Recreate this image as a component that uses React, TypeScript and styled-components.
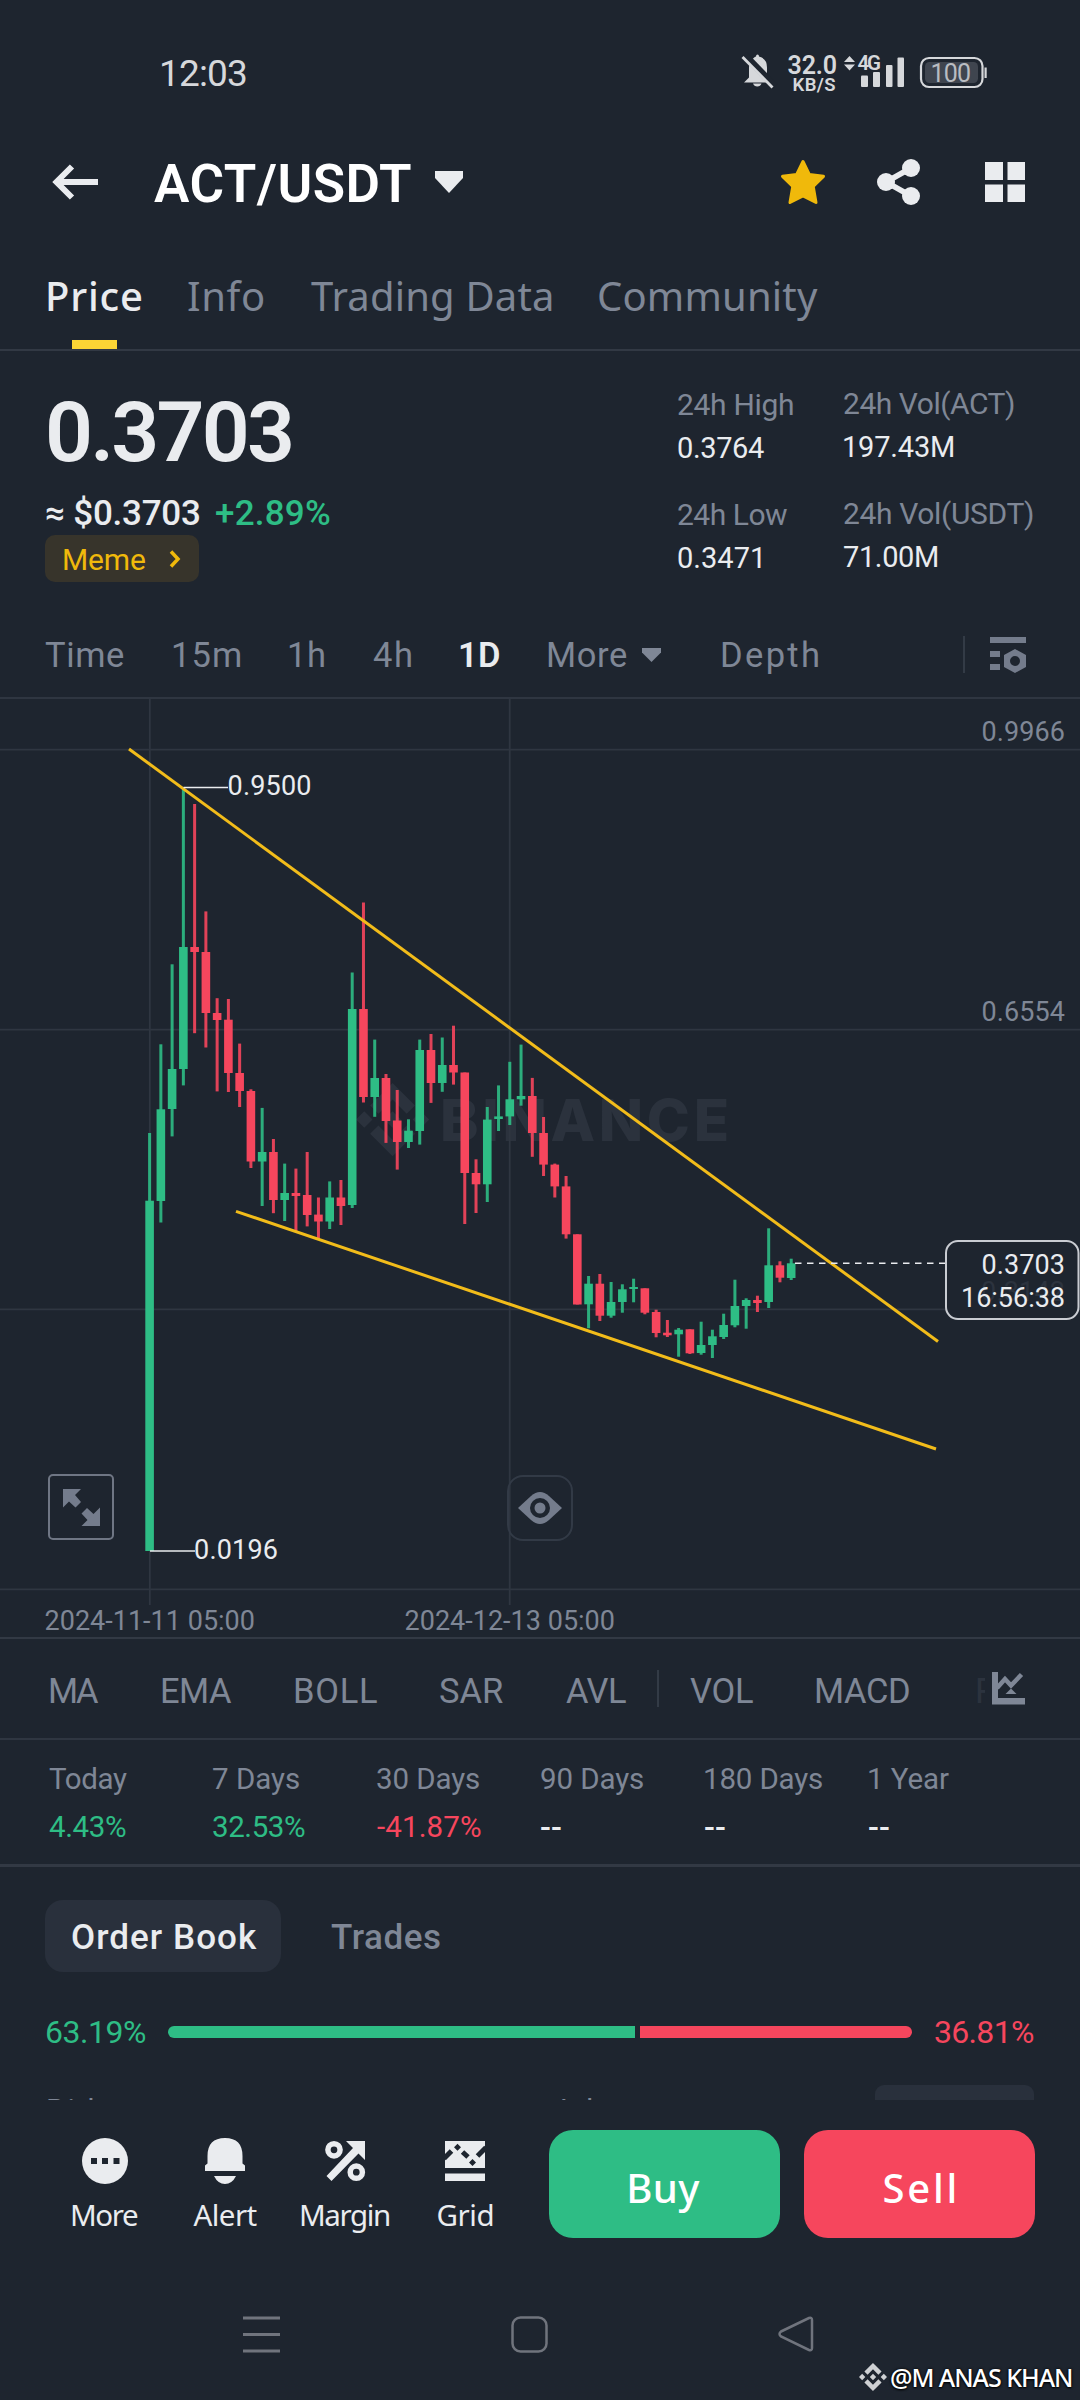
import React, { useMemo } from "react";
import styled, { createGlobalStyle } from "styled-components";

const c = {
  bg: "#1e252f",
  panel: "#29303c",
  line: "#2f3641",
  text: "#eaecef",
  muted: "#7f8796",
  icon: "#747c8c",
  green: "#2ebd85",
  red: "#f6465d",
  gold: "#f0b90b",
};

const NUMERIC = 'Roboto, "Liberation Sans", sans-serif';
const HUMANIST = '"Noto Sans", "Open Sans", sans-serif';

const GlobalStyle = createGlobalStyle`
  * { box-sizing: border-box; }
  html, body { margin: 0; background: ${c.bg}; }
  body { font-family: ${NUMERIC}; color: ${c.text}; }
  svg { display: block; }
`;

/* ---------- text with an exact visible width ---------- */

const TextBox = styled.span<{
  $w: number;
  $size: number;
  $weight: number;
  $color: string;
  $h: number;
  $drop: number;
  $family: string;
}>`
  display: block;
  flex: none;
  width: ${(p) => p.$w}px;
  height: ${(p) => p.$h}px;
  margin-top: ${(p) => p.$drop}px;
  line-height: ${(p) => p.$h}px;
  font-family: ${(p) => p.$family};
  font-size: ${(p) => p.$size}px;
  font-weight: ${(p) => p.$weight};
  color: ${(p) => p.$color};
  white-space: nowrap;
`;

type LabelProps = {
  children: string;
  w: number;
  size: number;
  h?: number;
  weight?: number;
  color?: string;
  drop?: number;
  family?: string;
};

function Label({ children, w, size, h = 30, weight = 400, color = c.muted, drop = 0, family = NUMERIC }: LabelProps) {
  const fit = useMemo(() => {
    const ctx = document.createElement("canvas").getContext("2d");
    if (!ctx) return { letterSpacing: "0px", textIndent: "0px" };
    ctx.font = `${weight} ${size}px ${family}`;
    const m = ctx.measureText(children);
    const ink = m.actualBoundingBoxLeft + m.actualBoundingBoxRight;
    const spacing = (w - ink) / Math.max(1, children.length - 1);
    return { letterSpacing: `${spacing.toFixed(2)}px`, textIndent: `${m.actualBoundingBoxLeft.toFixed(1)}px` };
  }, [children, w, size, weight, family]);
  return (
    <TextBox $w={w} $size={size} $weight={weight} $color={color} $h={h} $drop={drop} $family={family} style={fit}>
      {children}
    </TextBox>
  );
}

/* ---------- layout ---------- */

const Page = styled.main`
  position: relative;
  width: 1080px;
  height: 2400px;
  display: flex;
  flex-direction: column;
  overflow: hidden;
  background: ${c.bg};
`;

const StatusBar = styled.div`
  display: flex;
  align-items: center;
  justify-content: space-between;
  height: 146px;
  padding: 0 92px 0 162px;
`;

const Header = styled.header`
  display: flex;
  align-items: center;
  height: 72px;
  padding: 0 55px 0 52px;
`;

const HeaderTitle = styled.div`
  display: flex;
  align-items: center;
  gap: 24px;
  margin-left: 56px;
  flex: 1;
`;

const HeaderActions = styled.div`
  display: flex;
  align-items: center;
`;

const ActionIcon = styled.svg<{ $gap?: number }>`
  margin-left: ${(p) => p.$gap ?? 0}px;
`;

const Tabs = styled.nav`
  display: flex;
  gap: 47px;
  height: 133px;
  padding: 58px 48px 0;
  border-bottom: 2px solid #323944;
`;

const Tab = styled.div`
  display: flex;
  flex-direction: column;
  align-items: center;
  gap: 24px;
`;

const TabMark = styled.span`
  width: 45px;
  height: 9px;
  background: #fcd535;
`;

const Quote = styled.section`
  display: flex;
  height: 261px;
  padding: 0 46px 0 45px;
`;

const QuoteMain = styled.div`
  flex: 1;
  padding-top: 47px;
`;

const QuoteSub = styled.div`
  display: flex;
  gap: 17px;
  margin: 28px 0 3px 1px;
`;

const Indent = styled.div<{ $x: number }>`
  padding-left: ${(p) => p.$x}px;
`;

const Tag = styled.div`
  display: flex;
  align-items: center;
  gap: 24px;
  width: 154px;
  height: 47px;
  padding-left: 19px;
  border-radius: 10px;
  background: #37342b;
`;

const StatColumn = styled.div<{ $w: number; $top: number }>`
  width: ${(p) => p.$w}px;
  padding-top: ${(p) => p.$top}px;
`;

const Stat = styled.div`
  display: flex;
  flex-direction: column;
  gap: 13px;
  margin-bottom: 37px;
`;

const Intervals = styled.nav`
  display: flex;
  align-items: center;
  gap: 49px;
  height: 87px;
  padding: 0 54px 0 45px;
  border-bottom: 2px solid ${c.line};
`;

const MoreMenu = styled.div`
  display: flex;
  align-items: center;
  gap: 15px;
  margin-right: 12px;
`;

const ToolEnd = styled.div<{ $gap: number }>`
  display: flex;
  align-items: center;
  gap: ${(p) => p.$gap}px;
  margin-left: auto;
`;

const Separator = styled.span`
  flex: none;
  width: 2px;
  height: 37px;
  background: #333b46;
`;

const ChartArea = styled.section`
  position: relative;
  height: 940px;
  border-bottom: 2px solid #323944;
`;

const ChartButton = styled.button<{ $x: number; $y: number; $round: number; $edge: string }>`
  position: absolute;
  left: ${(p) => p.$x}px;
  top: ${(p) => p.$y}px;
  display: flex;
  align-items: center;
  justify-content: center;
  width: 66px;
  height: 66px;
  padding: 0;
  border: 2px solid ${(p) => p.$edge};
  border-radius: ${(p) => p.$round}px;
  background: transparent;
`;

const Indicators = styled.nav`
  display: flex;
  align-items: center;
  gap: 63px;
  height: 101px;
  padding: 0 55px 0 50px;
  border-bottom: 2px solid ${c.line};
`;

const IndicatorSplit = styled.div`
  display: flex;
  align-items: center;
  gap: 31px;
`;

const Fade = styled.span`
  width: 8px;
  overflow: hidden;
  opacity: 0.15;
`;

const Periods = styled.section`
  display: grid;
  grid-template-columns: repeat(6, 164px);
  height: 127px;
  padding: 24px 0 0 49px;
  border-bottom: 3px solid #323944;
`;

const Period = styled.div`
  display: flex;
  flex-direction: column;
  gap: 18px;
`;

const Book = styled.section`
  height: 233px;
  padding: 33px 46px 0 45px;
  overflow: hidden;
`;

const BookTabs = styled.div`
  display: flex;
  align-items: center;
  gap: 50px;
`;

const BookTabActive = styled.div`
  display: flex;
  align-items: center;
  height: 72px;
  width: 236px;
  padding-left: 27px;
  border-radius: 18px;
  background: ${c.panel};
`;

const Ratio = styled.div`
  display: flex;
  align-items: center;
  height: 40px;
  margin-top: 40px;
  padding-left: 2px;
`;

const RatioTrack = styled.div`
  display: flex;
  gap: 5px;
  flex: 1;
  margin: 0 23px 0 22px;
`;

const RatioPart = styled.span<{ $side: "bid" | "ask" }>`
  height: 12px;
  background: ${(p) => (p.$side === "bid" ? c.green : c.red)};
  border-radius: ${(p) => (p.$side === "bid" ? "6px 0 0 6px" : "0 6px 6px 0")};
`;

const BookHead = styled.div`
  display: flex;
  margin-top: 33px;
  padding-left: 3px;
`;

const BookCell = styled.div<{ $w: number }>`
  flex: none;
  width: ${(p) => p.$w}px;
  padding-top: 9px;
`;

const Precision = styled.span`
  flex: none;
  width: 159px;
  height: 48px;
  border-radius: 9px;
  background: ${c.panel};
`;

const Toolbar = styled.footer`
  display: flex;
  height: 168px;
  padding: 30px 45px 0;
`;

const Shortcuts = styled.div`
  flex: none;
  display: grid;
  grid-template-columns: repeat(4, 120px);
  width: 504px;
  padding-top: 8px;
`;

const Shortcut = styled.div`
  display: flex;
  flex-direction: column;
  align-items: center;
  gap: 14px;
  width: 120px;
`;

const TradeButtons = styled.div`
  display: flex;
  flex: none;
  gap: 24px;
`;

const Trade = styled.button<{ $bg: string }>`
  display: flex;
  justify-content: center;
  flex: none;
  width: 231px;
  height: 108px;
  padding: 33px 0 0;
  border: 0;
  border-radius: 24px;
  background: ${(p) => p.$bg};
`;

const SystemNav = styled.nav`
  display: flex;
  align-items: center;
  justify-content: space-between;
  height: 132px;
  padding: 0 266px 0 243px;
`;

const Credit = styled.div`
  position: absolute;
  right: 8px;
  bottom: 8px;
  display: flex;
  align-items: center;
  gap: 4px;
  text-shadow: 0 0 3px #000, 0 1px 2px #000;
`;

/* ---------- chart data: [up, high, low, body top, body bottom] in px ---------- */

type Candle = [0 | 1, number, number, number, number];

const candles: Candle[] = [
  [1, 1133, 1551, 1200.7, 1551], [1, 1044.3, 1222.5, 1109.3, 1201], [1, 964.3, 1136.4, 1069, 1109],
  [1, 787.5, 1085.4, 947, 1069], [0, 804, 1033.2, 947, 952], [0, 911.4, 1047.5, 952, 1013],
  [0, 998.2, 1091.4, 1013, 1020], [0, 999, 1092, 1019.7, 1073], [0, 1043.6, 1107, 1073, 1091],
  [0, 1089.3, 1168, 1091, 1161.5], [1, 1107.9, 1206, 1152, 1161.5], [0, 1139, 1213.2, 1152, 1200],
  [1, 1163.6, 1221, 1193, 1200], [0, 1168.6, 1231, 1193, 1196], [0, 1152, 1226.4, 1195, 1215],
  [0, 1197.5, 1238.5, 1214.6, 1221.5], [1, 1181.4, 1229, 1197.5, 1221.5], [0, 1180, 1225, 1197.5, 1206],
  [1, 972.5, 1208, 1009, 1205], [0, 902.5, 1102.5, 1009, 1097], [1, 1039.6, 1116.8, 1078, 1097],
  [0, 1074, 1142.9, 1078, 1121], [0, 1090, 1169.6, 1120.5, 1142], [1, 1119.3, 1148, 1130.7, 1142],
  [1, 1039.6, 1144.6, 1050, 1131], [0, 1034, 1102.9, 1050, 1083], [1, 1037.5, 1091.8, 1065, 1083],
  [0, 1025.7, 1084.6, 1065, 1072.5], [0, 1072.5, 1224, 1072.5, 1173], [0, 1159.3, 1213, 1173, 1184.3],
  [1, 1107, 1202, 1119.6, 1184.3], [1, 1085.4, 1131, 1116.4, 1119], [1, 1061.8, 1125, 1099.3, 1116.4],
  [1, 1044.6, 1105.7, 1096, 1099.3], [0, 1077.9, 1156.8, 1096, 1133], [0, 1117, 1176, 1133, 1164.6],
  [0, 1163.6, 1197.5, 1164.6, 1186.4], [0, 1176, 1238.6, 1186.4, 1234.3], [0, 1234.3, 1304.5, 1234.3, 1304.5],
  [1, 1276, 1328.3, 1283.7, 1304.3], [0, 1274, 1321, 1283.7, 1315.7], [1, 1282, 1317.7, 1302, 1315.7],
  [1, 1284.3, 1312.7, 1289.3, 1302], [1, 1278.7, 1302.3, 1287, 1289], [0, 1288.3, 1314.3, 1288.3, 1312.7],
  [0, 1309.7, 1337.3, 1312, 1333], [0, 1320, 1337, 1332.7, 1335.3], [1, 1328, 1356.7, 1329.7, 1334.3],
  [0, 1329.3, 1354, 1329.3, 1353.3], [1, 1321.7, 1354.7, 1345, 1353], [1, 1329.7, 1358, 1336.3, 1345],
  [1, 1313.7, 1339, 1325, 1337], [1, 1279.7, 1327.3, 1306, 1325.3], [1, 1298.3, 1328.7, 1300, 1306],
  [0, 1295.7, 1312, 1300, 1303], [1, 1228.3, 1308, 1265.3, 1302], [0, 1261.3, 1282.3, 1265.3, 1277.7],
  [1, 1258.7, 1280, 1263.3, 1278],
];

const BRAND =
  "M16.624 13.9202l2.7175 2.7154-7.353 7.353-7.353-7.352 2.7175-2.7164 4.6355 4.6595 4.6356-4.6595zm4.6366-4.6366L24 12l-2.7154 2.7164L18.5682 12l2.6924-2.7164zm-9.272.001l2.7163 2.6914-2.7164 2.7174v-.001L9.2721 12l2.7164-2.7154zm-9.2722-.001L5.4088 12l-2.6914 2.6924L0 12l2.7164-2.7164zM11.9885.0115l7.353 7.329-2.7174 2.7154-4.6356-4.6356-4.6355 4.6595-2.7174-2.7154 7.353-7.353z";

const AxisText = styled.text`
  font: 400 27px Roboto, sans-serif;
`;

const MarkText = styled.text`
  font: 800 58px Inter, sans-serif;
`;

function PriceChart() {
  return (
    <svg width="1080" height="938" viewBox="0 699 1080 938">
      <g fill="#2b323d">
        <path d={BRAND} transform="translate(356 1083) scale(3.05)" />
        <MarkText x="440" y="1141" textLength="289">BINANCE</MarkText>
      </g>
      <g stroke={c.line} strokeWidth="1.8">
        {[749.6, 1029.6, 1309.4, 1589.4].map((y) => (
          <line key={y} x1="0" x2="1080" y1={y} y2={y} />
        ))}
        {[149.8, 509.7].map((x) => (
          <line key={x} x1={x} x2={x} y1="699" y2="1605" />
        ))}
      </g>
      {candles.map(([up, high, low, top, bottom], i) => {
        const x = 149.6 + i * 11.256;
        return (
          <g key={i} fill={up ? c.green : c.red}>
            <rect x={x - 1.5} y={high} width="3" height={low - high} opacity="0.9" />
            <rect x={x - 4.3} y={top} width="8.6" height={bottom - top} />
          </g>
        );
      })}
      <g stroke="#f2bc1a" strokeWidth="3">
        <line x1="129" y1="749" x2="938" y2="1341.5" />
        <line x1="236" y1="1211.3" x2="936" y2="1449" />
      </g>
      <g stroke="#eaecef" strokeWidth="1.6">
        <line x1="183.5" y1="787.5" x2="228" y2="787.5" />
        <line x1="150" y1="1551" x2="195" y2="1551" />
        <line x1="795" y1="1263.3" x2="945" y2="1263.3" strokeDasharray="6.5 5.5" />
      </g>
      <g fill={c.text}>
        <AxisText x="227.5" y="794.7" textLength="84">0.9500</AxisText>
        <AxisText x="194" y="1558.7" textLength="84">0.0196</AxisText>
      </g>
      <g fill={c.muted}>
        <AxisText x="981.5" y="741" textLength="83.5">0.9966</AxisText>
        <AxisText x="981.5" y="1021.3" textLength="83.5">0.6554</AxisText>
        <AxisText x="44.5" y="1630" textLength="210.5">2024-11-11 05:00</AxisText>
        <AxisText x="404.5" y="1630" textLength="210.5">2024-12-13 05:00</AxisText>
      </g>
      <rect x="946" y="1241" width="132.5" height="78" rx="12" fill={c.bg} stroke="#c9ccd2" strokeWidth="2" />
      <AxisText x="981" y="1301" textLength="84" fill="#2c333e">0.3142</AxisText>
      <g fill={c.text}>
        <AxisText x="981.5" y="1274" textLength="83.5">0.3703</AxisText>
        <AxisText x="961" y="1307" textLength="104">16:56:38</AxisText>
      </g>
    </svg>
  );
}

/* ---------- icons ---------- */

const StatusIcons = () => (
  <svg width="250" height="48" viewBox="738 49 250 48" fill="#d6d8db">
    <path d="M757.5 54.5q1.5 0 1.5 2 8 2 8 11v10l5 5H744l5-5v-10q0-5 3-8t4-3q0-2 1.500-2zM753 83.500h8.500q-1 3-4.200 3t-4.300-3z" />
    <path d="M744 54.500l31 32" stroke={c.bg} strokeWidth="7" />
    <path d="M742.500 57l30 30.500" stroke="#d6d8db" strokeWidth="2.800" />
    <text x="787.500" y="73.500" textLength="49.500" fontFamily="Roboto" fontSize="25" fontWeight="600">32.0</text>
    <text x="792.500" y="90.500" textLength="43" fontFamily="Roboto" fontSize="18.500" fontWeight="600">KB/S</text>
    <path d="M844 62l5.500-6 5.500 6zM844 64.500h11l-5.500 6z" />
    <text x="857.500" y="69.500" textLength="23.500" fontFamily="Roboto" fontSize="20.500" fontWeight="600">4G</text>
    <rect x="861" y="75.500" width="7" height="11.500" rx="1" />
    <rect x="873" y="72" width="7" height="15" rx="1" />
    <rect x="886" y="65" width="6.500" height="22" rx="1" />
    <rect x="897.500" y="57.500" width="6.500" height="29.500" rx="1" />
    <rect x="921" y="58" width="61.500" height="29" rx="8" fill="none" stroke="#d6d8db" strokeWidth="2.200" />
    <rect x="925" y="62" width="53" height="21" rx="4.500" fill="#3f454f" />
    <rect x="984.500" y="67.500" width="2.200" height="10.500" />
    <text x="930.500" y="81.500" textLength="40.500" fontFamily="Roboto" fontSize="25" fill="#b9bcc1">100</text>
  </svg>
);

const MoreIcon = () => (
  <svg width="46" height="46" viewBox="0 0 46 46">
    <circle cx="23" cy="23" r="23" fill={c.text} />
    <path d="M9 20h6v6H9zM20 20h6v6h-6zM31.500 20h6v6h-6z" fill={c.bg} />
  </svg>
);

const BellIcon = () => (
  <svg width="46" height="46" viewBox="0 0 46 46" fill={c.text}>
    <path d="M5.500 18Q5.500 0 23 0t17.500 18v7.500l2.500 2V33H3v-5.500l2.500-2zM12 38h22q-4 8-11 8t-11-8z" />
  </svg>
);

const MarginIcon = () => (
  <svg width="46" height="46" viewBox="0 0 46 46">
    <path d="M24 3h19v19l-6.500-6.500L9.500 43 4.500 38 31 10z" fill={c.text} />
    <g fill="none" stroke={c.text} strokeWidth="5.500">
      <circle cx="12" cy="11.800" r="6.100" />
      <circle cx="34.300" cy="34.200" r="6.100" />
    </g>
  </svg>
);

const GridBotIcon = () => (
  <svg width="46" height="46" viewBox="0 0 46 46">
    <path d="M3 3h40v27H3zM3 35.500h40V43H3z" fill={c.text} />
    <path d="M2 20.500l7.500-7.500M20.500 14l5.500 5M35.500 18L44 9.500" stroke={c.bg} strokeWidth="5" fill="none" />
    <path d="M15.500 5.800l3.500 3.500-3.500 3.500-3.500-3.500zM30.500 21l3.500 3.500-3.500 3.500-3.500-3.500z" fill={c.bg} />
  </svg>
);

/* ---------- screen ---------- */

const tabs: [string, number][] = [["Price", 93], ["Info", 76], ["Trading Data", 241], ["Community", 219]];
const intervals: [string, number][] = [["Time", 79], ["15m", 67], ["1h", 35], ["4h", 38], ["1D", 39]];
const indicators: [string, number][] = [["MA", 49], ["EMA", 70], ["BOLL", 82], ["SAR", 63]];
const periods: [string, number, string, number, string][] = [
  ["Today", 78, "4.43%", 77, c.green],
  ["7 Days", 86, "32.53%", 92, c.green],
  ["30 Days", 102, "-41.87%", 104, c.red],
  ["90 Days", 102, "--", 20, c.text],
  ["180 Days", 117, "--", 20, c.text],
  ["1 Year", 80, "--", 20, c.text],
];
const stats: [number, number, [string, number, string, number][]][] = [
  [166, 39, [["24h High", 115, "0.3764", 86], ["24h Low", 109, "0.3471", 83]]],
  [190, 38, [["24h Vol(ACT)", 170, "197.43M", 109], ["24h Vol(USDT)", 189, "71.00M", 93]]],
];
const shortcuts: [string, number, () => React.JSX.Element][] = [
  ["More", 66, MoreIcon],
  ["Alert", 63, BellIcon],
  ["Margin", 88, MarginIcon],
  ["Grid", 55, GridBotIcon],
];

export default function App() {
  return (
    <Page>
      <GlobalStyle />
      <StatusBar>
        <Label w={84} size={37} h={40} drop={2} color="#d6d8db">12:03</Label>
        <StatusIcons />
      </StatusBar>

      <Header>
        <svg width="46" height="36" viewBox="0 0 46 36" fill="none" stroke={c.text} strokeWidth="6">
          <path d="M4 18h42M20 2.500L4.500 18 20 33.500" />
        </svg>
        <HeaderTitle>
          <Label w={257} size={53} h={60} drop={3} weight={600} color="#ffffff">ACT/USDT</Label>
          <svg width="28" height="22" viewBox="0 0 28 22">
            <path d="M0 0h28v7L14 22 0 7z" fill={c.text} />
          </svg>
        </HeaderTitle>
        <HeaderActions>
          <svg width="46" height="46" viewBox="0 0 46 46">
            <path
              d="M23 2.500l6.300 13L43.500 17.300 33.200 27.300 36 43.500 23 37 10 43.500l2.800-16.200L2.500 17.300l14.200-1.800z"
              fill={c.gold} stroke={c.gold} strokeWidth="3" strokeLinejoin="round"
            />
          </svg>
          <ActionIcon $gap={51} width="43" height="46" viewBox="0 0 43 46" fill={c.text}>
            <circle cx="9" cy="23" r="9" />
            <circle cx="34" cy="9" r="9" />
            <circle cx="34" cy="37" r="9" />
            <path d="M34 9L9 23l25 14" fill="none" stroke={c.text} strokeWidth="5.500" />
          </ActionIcon>
          <ActionIcon $gap={65} width="40" height="40" viewBox="0 0 40 40" fill={c.text}>
            <path d="M0 0h18v18H0zM22.500 0H40v18H22.500zM0 22.500h18V40H0zM22.500 22.500H40V40H22.500z" />
          </ActionIcon>
        </HeaderActions>
      </Header>

      <Tabs>
        {tabs.map(([name, w], i) => (
          <Tab key={name}>
            <Label w={w} size={40} h={40} weight={i === 0 ? 500 : 400} family={HUMANIST} color={i === 0 ? c.text : c.muted}>
              {name}
            </Label>
            {i === 0 && <TabMark />}
          </Tab>
        ))}
      </Tabs>

      <Quote>
        <QuoteMain>
          <Indent $x={4}>
            <Label w={242} size={84} h={70} weight={600} color={c.text}>0.3703</Label>
          </Indent>
          <QuoteSub>
            <Label w={153} size={35} h={36} weight={500} color={c.text}>≈ $0.3703</Label>
            <Label w={114} size={35} h={36} weight={500} color={c.green}>+2.89%</Label>
          </QuoteSub>
          <Tag>
            <Label w={81} size={30} drop={2} color={c.gold}>Meme</Label>
            <svg width="12" height="18" viewBox="0 0 12 18" fill="none" stroke={c.gold} strokeWidth="3.500">
              <path d="M2 1.500L9 9l-7 7.500" />
            </svg>
          </Tag>
        </QuoteMain>
        {stats.map(([w, top, rows]) => (
          <StatColumn key={w} $w={w} $top={top}>
            {rows.map(([name, nw, value, vw]) => (
              <Stat key={name}>
                <Label w={nw} size={30}>{name}</Label>
                <Label w={vw} size={29} color={c.text}>{value}</Label>
              </Stat>
            ))}
          </StatColumn>
        ))}
      </Quote>

      <Intervals>
        {intervals.map(([name, w]) => (
          <Label key={name} w={w} size={34.500} h={36} weight={name === "1D" ? 600 : 400} color={name === "1D" ? c.text : c.muted}>
            {name}
          </Label>
        ))}
        <MoreMenu>
          <Label w={79} size={34.500} h={36}>More</Label>
          <svg width="19" height="14" viewBox="0 0 19 14">
            <path d="M0 0h19v4.500L9.500 14 0 4.500z" fill={c.muted} />
          </svg>
        </MoreMenu>
        <Label w={96} size={34.500} h={36}>Depth</Label>
        <ToolEnd $gap={25}>
          <Separator />
          <svg width="36" height="36" viewBox="0 0 36 36" fill={c.icon}>
            <path d="M0 0h36v6H0zM0 14h10v6H0zM0 27h10v6H0z" />
            <path fillRule="evenodd" d="M25 12l11 6v12l-11 6-11-6V18zM25 19a5 5 0 100 10 5 5 0 000-10z" />
          </svg>
        </ToolEnd>
      </Intervals>

      <ChartArea>
        <PriceChart />
        <ChartButton $x={48} $y={775} $round={5} $edge="#6f7684" aria-label="Expand">
          <svg width="37" height="37" viewBox="0 0 37 37" fill={c.icon}>
            <path d="M0 0h18l-6 6 6 7-5.500 5.500-6.500-6-6 6zM37 37H18.500l6-6-6-6.500L24 19l6.500 6 6.500-6.500z" />
          </svg>
        </ChartButton>
        <ChartButton $x={507} $y={776} $round={16} $edge="#323a46" aria-label="Show drawings">
          <svg width="44" height="32" viewBox="0 0 44 32">
            <path d="M0 16L13 4q9-8 18 0l13 12-13 12q-9 8-18 0z" fill={c.icon} />
            <circle cx="22" cy="16" r="10" fill={c.bg} />
            <circle cx="22" cy="16" r="5.500" fill={c.icon} />
          </svg>
        </ChartButton>
      </ChartArea>

      <Indicators>
        {indicators.map(([name, w]) => (
          <Label key={name} w={w} size={34.500} h={36} drop={4}>{name}</Label>
        ))}
        <IndicatorSplit>
          <Label w={60} size={34.500} h={36} drop={4}>AVL</Label>
          <Separator />
          <Label w={63} size={34.500} h={36} drop={4}>VOL</Label>
        </IndicatorSplit>
        <Label w={93} size={34.500} h={36} drop={4}>MACD</Label>
        <ToolEnd $gap={7}>
          <Fade><Label w={18} size={34.500} h={36} drop={4}>R</Label></Fade>
          <svg width="33" height="33" viewBox="0 0 33 33" fill={c.muted}>
            <path d="M0 0h6v26h27v6.500H0z" />
            <path d="M5 16l8-9 6 6.500L29.500 2.500" fill="none" stroke={c.muted} strokeWidth="4.500" />
            <path d="M19 16.500l5.500 5.500h-11z" />
          </svg>
        </ToolEnd>
      </Indicators>

      <Periods>
        {periods.map(([name, nw, value, vw, color]) => (
          <Period key={name}>
            <Label w={nw} size={29.500}>{name}</Label>
            <Label w={vw} size={value === "--" ? 32 : 29.500} weight={value === "--" ? 500 : 400} color={color}>{value}</Label>
          </Period>
        ))}
      </Periods>

      <Book>
        <BookTabs>
          <BookTabActive>
            <Label w={185} size={35} h={68} drop={4} weight={500} color={c.text}>Order Book</Label>
          </BookTabActive>
          <Label w={109} size={35} h={68} drop={4} weight={500}>Trades</Label>
        </BookTabs>
        <Ratio>
          <Label w={99} size={32} h={40} color={c.green}>63.19%</Label>
          <RatioTrack>
            <RatioPart $side="bid" style={{ flexGrow: 63.19 }} />
            <RatioPart $side="ask" style={{ flexGrow: 36.81 }} />
          </RatioTrack>
          <Label w={99} size={32} h={40} color={c.red}>36.81%</Label>
        </Ratio>
        <BookHead>
          <BookCell $w={506}><Label w={63} size={30} h={32}>Bids</Label></BookCell>
          <BookCell $w={321}><Label w={60} size={30} h={32}>Asks</Label></BookCell>
          <Precision />
        </BookHead>
      </Book>

      <Toolbar>
        <Shortcuts>
          {shortcuts.map(([name, w, Icon]) => (
            <Shortcut key={name}>
              <Icon />
              <Label w={w} size={29.500} h={34} family={HUMANIST} color={c.text}>{name}</Label>
            </Shortcut>
          ))}
        </Shortcuts>
        <TradeButtons>
          <Trade $bg={c.green}><Label w={71} size={40} h={50} weight={500} family={HUMANIST} color="#ffffff">Buy</Label></Trade>
          <Trade $bg={c.red}><Label w={70} size={40} h={50} weight={500} family={HUMANIST} color="#ffffff">Sell</Label></Trade>
        </TradeButtons>
      </Toolbar>

      <SystemNav>
        <svg width="37" height="37" viewBox="0 0 37 37" fill="none" stroke="#70747d" strokeWidth="3">
          <path d="M0 2h37M0 18.500h37M0 35h37" />
        </svg>
        <svg width="37" height="37" viewBox="0 0 37 37" fill="none" stroke="#70747d" strokeWidth="2.500">
          <rect x="1.500" y="1.500" width="34" height="34" rx="8" />
        </svg>
        <svg width="36" height="36" viewBox="0 0 36 36" fill="none" stroke="#70747d" strokeWidth="2.500">
          <path d="M3 15.500L31 2q3-1 3 2v28q0 3-3 2L3 20.500q-3-2.500 0-5z" />
        </svg>
      </SystemNav>

      <Credit>
        <svg width="28" height="28" viewBox="0 0 24 24" fill="#cfd1d4"><path d={BRAND} /></svg>
        <Label w={181} size={25} h={30} weight={500} family={HUMANIST} color="#ffffff">@M ANAS KHAN</Label>
      </Credit>
    </Page>
  );
}
